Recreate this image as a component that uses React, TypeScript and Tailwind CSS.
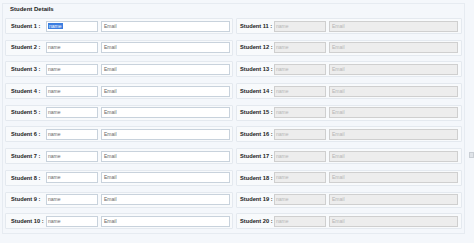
import React from "react";

const left = [1, 2, 3, 4, 5, 6, 7, 8, 9, 10];
const right = [11, 12, 13, 14, 15, 16, 17, 18, 19, 20];

const StudentRow: React.FC<{ n: number; disabled?: boolean }> = ({ n, disabled }) => {
  const box = disabled
    ? "bg-[#ededed] border-[#cfcfcf] text-[#b4b4b4]"
    : "bg-white border-[#c8d2dc] text-[#666]";
  return (
    <div className="h-[16px] flex items-center bg-[#f8fafc] border border-[#e4e9ef] rounded-[1px]">
      <div className={`${disabled ? "w-[37px] pl-[3px]" : "w-[40px] pl-[5px]"} shrink-0 text-[5.7px] font-bold text-[#222] whitespace-nowrap`}>
        Student {n} :
      </div>
      <div className={`w-[52px] h-[11px] border ${box} text-[5px] leading-[9px] pl-[1px] shrink-0`}>
        {n === 1 ? <span className="bg-[#3b7de0] text-white px-[1px]">name</span> : "name"}
      </div>
      <div className={`ml-[3px] w-[129px] h-[11px] border ${box} text-[5px] leading-[8px] pl-[2px] shrink-0`}>
        Email
      </div>
    </div>
  );
};

export default function App() {
  return (
    <div className="w-[474px] h-[243px] bg-[#f4f7fb] relative overflow-hidden" style={{ fontFamily: '"Liberation Sans", Arial, sans-serif' }}>
      <div className="absolute right-0 top-[152px] w-[5px] h-[6px] bg-[#dfe3e8] border border-[#c9ced4]" />
      <div className="pt-[3px] pl-[2px] w-[465px]">
        <div className="border border-[#e6ebf1] h-[231px] px-[2px]">
          <div className="text-[6px] font-bold text-[#222] pl-[5px] h-[14px] leading-[11px]">Student Details</div>
          <div className="flex gap-[3px]">
            <div className="w-[228px] flex flex-col gap-[5.7px]">
              {left.map((n) => (
                <StudentRow key={n} n={n} />
              ))}
            </div>
            <div className="w-[226px] flex flex-col gap-[5.7px]">
              {right.map((n) => (
                <StudentRow key={n} n={n} disabled />
              ))}
            </div>
          </div>
        </div>
      </div>
    </div>
  );
}
